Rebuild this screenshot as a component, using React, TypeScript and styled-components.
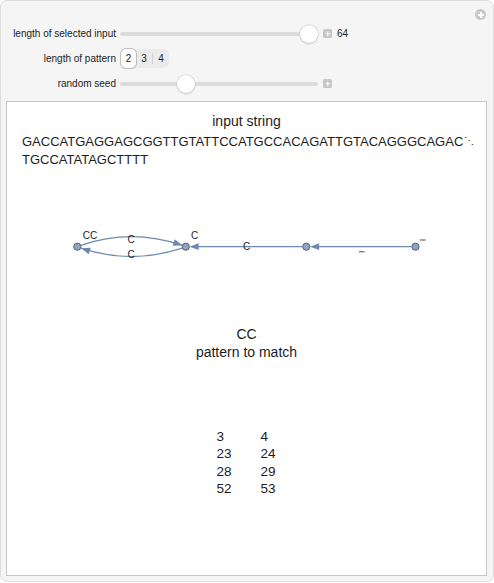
import { Fragment } from "react";
import styled, { createGlobalStyle } from "styled-components";

const GlobalStyle = createGlobalStyle`
  html, body {
    margin: 0;
    padding: 0;
    background: #ffffff;
  }
  * {
    box-sizing: border-box;
  }
`;

const Frame = styled.div`
  display: flex;
  flex-direction: column;
  width: 494px;
  height: 582px;
  padding: 0 6px 5px 5px;
  border: 1px solid #dedede;
  border-radius: 7px;
  background: #f5f5f5;
  font-family: "Liberation Sans", Arial, sans-serif;
  color: #1c1c1c;
`;

const TopBar = styled.div`
  display: flex;
  justify-content: flex-end;
  height: 20px;
  padding: 8px 1px 0 0;
`;

const CloseButton = styled.span`
  position: relative;
  width: 11px;
  height: 11px;
  border-radius: 50%;
  background: #c9c9c9;

  &::before,
  &::after {
    content: "";
    position: absolute;
    left: 50%;
    top: 50%;
    background: #ffffff;
    transform: translate(-50%, -50%);
  }
  &::before {
    width: 6px;
    height: 2px;
  }
  &::after {
    width: 2px;
    height: 6px;
  }
`;

const Controls = styled.div`
  display: grid;
  grid-template-columns: 110px auto;
  grid-auto-rows: 25px;
  column-gap: 4px;
  align-items: center;
  margin-bottom: 5px;
`;

const Label = styled.span`
  justify-self: end;
  font-size: 10px;
  color: #222222;
`;

const ControlCell = styled.div`
  display: flex;
  align-items: center;
  gap: 5px;
`;

const Track = styled.div`
  position: relative;
  display: flex;
  align-items: center;
  width: 198px;
  height: 20px;

  &::before {
    content: "";
    width: 100%;
    height: 4px;
    border-radius: 2px;
    background: #dcdcdc;
  }
`;

const Thumb = styled.span`
  position: absolute;
  top: 1px;
  width: 18px;
  height: 18px;
  margin-left: -9px;
  border-radius: 50%;
  background: #ffffff;
  box-shadow: 0 0 0 0.5px #c9c9c9, 0 1px 2px rgba(0, 0, 0, 0.18);
`;

const PlusBox = styled.span`
  position: relative;
  width: 9px;
  height: 9px;
  border-radius: 1.5px;
  background: #c6c6c6;

  &::before,
  &::after {
    content: "";
    position: absolute;
    left: 50%;
    top: 50%;
    background: #ffffff;
    transform: translate(-50%, -50%);
  }
  &::before {
    width: 5px;
    height: 1.5px;
  }
  &::after {
    width: 1.5px;
    height: 5px;
  }
`;

const Value = styled.span`
  font-size: 10px;
  color: #222222;
`;

const Segmented = styled.div`
  display: flex;
  align-items: stretch;
  height: 19px;
  margin-left: 1px;
  border-radius: 5px;
  background: #ebebeb;
`;

const Segment = styled.span<{ $active?: boolean }>`
  display: flex;
  align-items: center;
  justify-content: center;
  width: ${({ $active }) => ($active ? "15px" : "16px")};
  font-size: 10px;
  color: #222222;
  border-radius: ${({ $active }) => ($active ? "5px" : "0")};
  background: ${({ $active }) => ($active ? "#ffffff" : "transparent")};
  box-shadow: ${({ $active }) =>
    $active ? "0 0 0 1px #bdbdbd, 0 1px 1px rgba(0,0,0,0.1)" : "none"};
`;

const SegmentDivider = styled.span`
  width: 1px;
  margin: 4px 0;
  background: #d3d3d3;
`;

const Panel = styled.div`
  display: flex;
  flex-direction: column;
  flex: 1;
  border: 1px solid #c7c7c7;
  background: #ffffff;
`;

const Title = styled.div`
  margin-top: 10px;
  text-align: center;
  font-size: 14px;
  line-height: 18px;
`;

const Sequence = styled.div`
  margin-top: 2px;
  padding-left: 15px;
  font-size: 13px;
  line-height: 18px;
`;

const Continuation = styled.span`
  display: inline-block;
  margin-left: 1px;
  font-size: 10px;
  vertical-align: 2px;
`;

const Graph = styled.svg`
  display: block;
  width: 479px;
  height: 140px;
`;

const Pattern = styled.div`
  margin-top: 16px;
  text-align: center;
  font-size: 14px;
  line-height: 18px;
`;

const Matches = styled.div`
  display: grid;
  grid-template-columns: 44px 16px;
  justify-content: center;
  margin-top: 67px;
  font-size: 13.5px;
  line-height: 17.4px;
`;

const EDGE = "#6f89ad";

function arrowHead(tipX: number, tipY: number, fromX: number, fromY: number) {
  const dx = tipX - fromX;
  const dy = tipY - fromY;
  const len = Math.hypot(dx, dy);
  const ux = dx / len;
  const uy = dy / len;
  const bx = tipX - ux * 9;
  const by = tipY - uy * 9;
  const px = -uy * 3.4;
  const py = ux * 3.4;
  return `${tipX},${tipY} ${bx + px},${by + py} ${bx - px},${by - py}`;
}

const nodes = [
  { x: 77.3, y: 246.7 },
  { x: 185.8, y: 246.7 },
  { x: 306.3, y: 246.7 },
  { x: 415.5, y: 246.7 },
];

function DeBruijnGraph() {
  return (
    <Graph viewBox="7 169 479 140">
      <g stroke={EDGE} strokeWidth={1.3} fill="none">
        <path d="M 81 245.3 Q 131 228 182.2 245.3" />
        <path d="M 182.2 248.2 Q 131 265 81.2 248.2" />
        <line x1={302.5} y1={246.7} x2={195} y2={246.7} />
        <line x1={411.7} y1={246.7} x2={315} y2={246.7} />
      </g>
      <g fill={EDGE}>
        <polygon points={arrowHead(182.2, 245.3, 131, 228)} />
        <polygon points={arrowHead(81.2, 248.2, 131, 265)} />
        <polygon points={arrowHead(189.6, 246.7, 250, 246.7)} />
        <polygon points={arrowHead(310.1, 246.7, 370, 246.7)} />
      </g>
      <g
        fontFamily="'Liberation Sans', Arial, sans-serif"
        fontSize={10}
        fill="#1c1c1c"
        textAnchor="middle"
      >
        <text x={131} y={242.5}>C</text>
        <text x={131} y={258}>C</text>
        <text x={246.5} y={250.3}>C</text>
        <text x={90} y={239}>CC</text>
        <text x={194.5} y={238.6}>C</text>
      </g>
      <g stroke="#333333" strokeWidth={0.9}>
        <line x1={359} y1={251.8} x2={364.5} y2={251.8} />
        <line x1={420} y1={240} x2={425.5} y2={240} />
      </g>
      <g fill="#93a3bd" stroke="#4c586a" strokeWidth={0.9}>
        {nodes.map((n) => (
          <circle key={n.x} cx={n.x} cy={n.y} r={3.6} />
        ))}
      </g>
    </Graph>
  );
}

const matches = [
  [3, 4],
  [23, 24],
  [28, 29],
  [52, 53],
];

export default function App() {
  return (
    <>
      <GlobalStyle />
      <Frame>
        <TopBar>
          <CloseButton />
        </TopBar>
        <Controls>
          <Label>length of selected input</Label>
          <ControlCell>
            <Track>
              <Thumb style={{ left: "189px" }} />
            </Track>
            <PlusBox />
            <Value>64</Value>
          </ControlCell>

          <Label>length of pattern</Label>
          <ControlCell>
            <Segmented>
              <Segment $active>2</Segment>
              <Segment>3</Segment>
              <SegmentDivider />
              <Segment>4</Segment>
            </Segmented>
          </ControlCell>

          <Label>random seed</Label>
          <ControlCell>
            <Track>
              <Thumb style={{ left: "66px" }} />
            </Track>
            <PlusBox />
          </ControlCell>
        </Controls>
        <Panel>
          <Title>input string</Title>
          <Sequence>
            GACCATGAGGAGCGGTTGTATTCCATGCCACAGATTGTACAGGGCAGAC
            <Continuation>⋱</Continuation>
            <br />
            TGCCATATAGCTTTT
          </Sequence>
          <DeBruijnGraph />
          <Pattern>
            CC
            <br />
            pattern to match
          </Pattern>
          <Matches>
            {matches.map(([a, b]) => (
              <Fragment key={a}>
                <span>{a}</span>
                <span>{b}</span>
              </Fragment>
            ))}
          </Matches>
        </Panel>
      </Frame>
    </>
  );
}
